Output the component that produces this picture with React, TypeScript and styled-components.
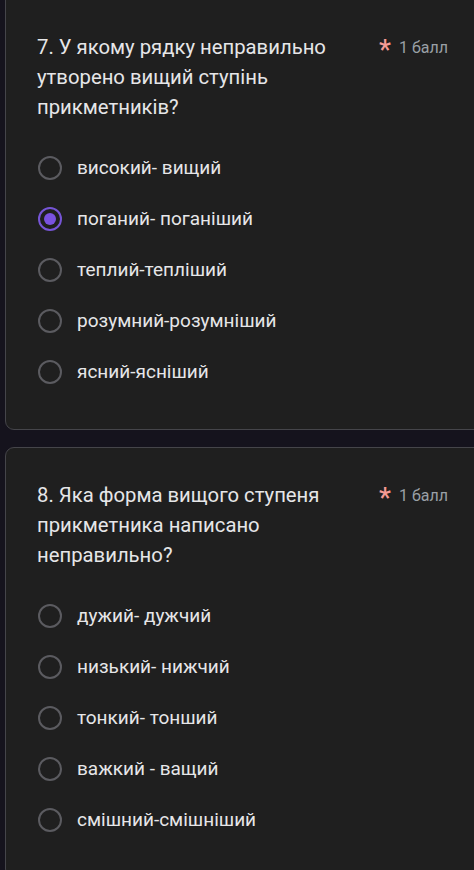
import React from "react";
import styled, { createGlobalStyle } from "styled-components";

const Global = createGlobalStyle`
  html, body { margin: 0; padding: 0; background: #15131d; overflow: hidden; }
  body { font-family: Roboto, "Noto Sans", Arial, sans-serif; }
`;

const Page = styled.div`
  display: flex;
  flex-direction: column;
  gap: 17px;
  padding-left: 5px;
  margin-top: -12px;
  width: 490px;
`;

const Card = styled.section<{ $top: number }>`
  background: #1f1f1f;
  border: 1px solid #45454a;
  border-radius: 9px;
  padding: ${(p) => p.$top}px 46px 32px 31px;
  display: flex;
  flex-direction: column;
  gap: 20px;
`;

const Header = styled.div`
  display: flex;
  justify-content: space-between;
  align-items: flex-start;
`;

const Title = styled.div`
  color: #e6e6e8;
  font-size: 20.3px;
  line-height: 30px;
  width: 320px;
`;

const Points = styled.div`
  display: flex;
  align-items: center;
  gap: 8px;
  color: #9aa0a6;
  font-size: 16px;
  line-height: 30px;
  padding-top: 1px;
`;

const Star = styled.span`
  color: #f59a94;
  font-size: 27px;
  font-weight: 500;
  line-height: 20px;
  padding-top: 4px;
`;

const Options = styled.div`
  display: flex;
  flex-direction: column;
`;

const Option = styled.label`
  display: flex;
  align-items: center;
  gap: 15px;
  height: 51px;
  padding-left: 1px;
  color: #e6e6e8;
  font-size: 19px;
`;

const Radio = styled.span<{ $on?: boolean }>`
  box-sizing: border-box;
  width: 24px;
  height: 24px;
  border-radius: 50%;
  border: 2px solid ${(p) => (p.$on ? "#7655d6" : "#5b5b60")};
  display: flex;
  align-items: center;
  justify-content: center;
  flex: none;
  &::after {
    content: "";
    display: ${(p) => (p.$on ? "block" : "none")};
    width: 12px;
    height: 12px;
    border-radius: 50%;
    background: #7a52e0;
  }
`;

const questions = [
  {
    top: 43,
    title: "7. У якому рядку неправильно утворено вищий ступінь прикметників?",
    options: ["високий- вищий", "поганий- поганіший", "теплий-тепліший", "розумний-розумніший", "ясний-ясніший"],
    selected: 1,
  },
  {
    top: 32,
    title: "8. Яка форма вищого ступеня прикметника написано неправильно?",
    options: ["дужий- дужчий", "низький- нижчий", "тонкий- тонший", "важкий - ващий", "смішний-смішніший"],
    selected: -1,
  },
];

export default function App() {
  return (
    <>
      <Global />
      <Page>
        {questions.map((q) => (
          <Card key={q.title} $top={q.top}>
            <Header>
              <Title>{q.title}</Title>
              <Points>
                <Star>*</Star>
                <span>1 балл</span>
              </Points>
            </Header>
            <Options>
              {q.options.map((o, i) => (
                <Option key={o}>
                  <Radio $on={i === q.selected} />
                  <span>{o}</span>
                </Option>
              ))}
            </Options>
          </Card>
        ))}
      </Page>
    </>
  );
}
